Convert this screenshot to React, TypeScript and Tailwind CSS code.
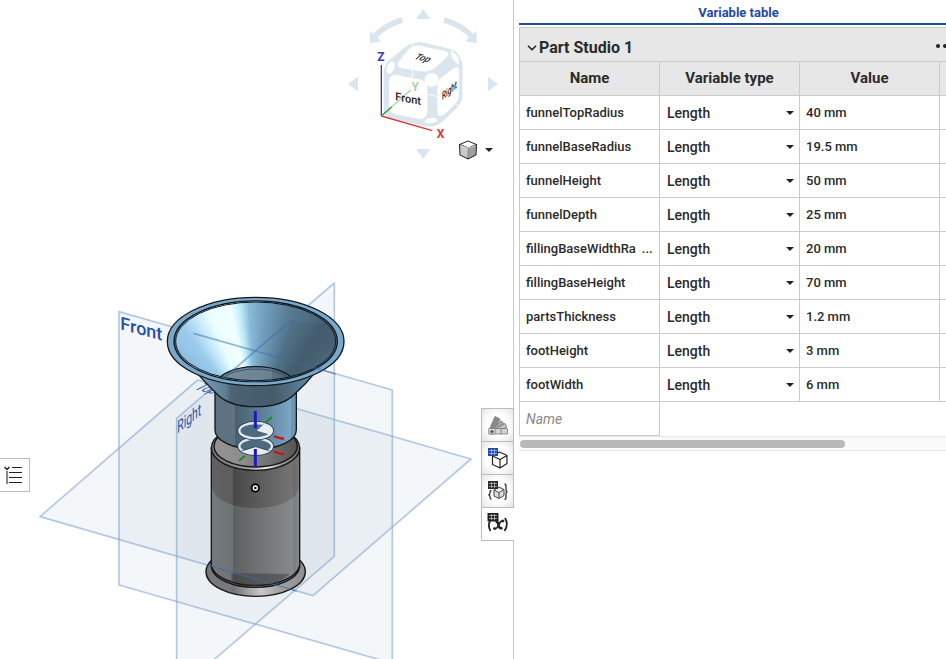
import { ChevronDown } from "lucide-react";

const variables = [
  { name: "funnelTopRadius", value: "40 mm" },
  { name: "funnelBaseRadius", value: "19.5 mm" },
  { name: "funnelHeight", value: "50 mm" },
  { name: "funnelDepth", value: "25 mm" },
  { name: "fillingBaseWidthRa", value: "20 mm", cut: true },
  { name: "fillingBaseHeight", value: "70 mm" },
  { name: "partsThickness", value: "1.2 mm" },
  { name: "footHeight", value: "3 mm" },
  { name: "footWidth", value: "6 mm" },
];

// light on the inside of the funnel: angle in degrees (counter-clockwise from the right), rgb
const coneLight: [number, number[]][] = [
  [-90, [110, 150, 180]],
  [0, [76, 103, 120]],
  [30, [70, 96, 114]],
  [64, [88, 124, 149]],
  [86, [118, 164, 195]],
  [95, [138, 188, 218]],
  [102, [190, 238, 250]],
  [109, [240, 255, 255]],
  [126, [236, 255, 255]],
  [140, [196, 231, 250]],
  [156, [156, 203, 236]],
  [185, [148, 197, 232]],
  [205, [156, 205, 238]],
  [222, [214, 242, 255]],
  [270, [140, 185, 215]],
];

const lightAt = (deg: number) => {
  const i = Math.max(1, coneLight.findIndex(([d]) => d >= deg));
  const [d0, a] = coneLight[i - 1];
  const [d1, b] = coneLight[i];
  const t = (deg - d0) / (d1 - d0);
  return `rgb(${a.map((c, k) => Math.round(c + (b[k] - c) * t)).join(",")})`;
};

const conePoint = (deg: number, cy: number, rx: number, ry: number) => {
  const r = (deg * Math.PI) / 180;
  return `${(677 + rx * Math.cos(r)).toFixed(1)},${(cy - ry * Math.sin(r)).toFixed(1)}`;
};

const coneSlices = Array.from({ length: 180 }, (_, i) => {
  const from = -90 + i * 2;
  const to = Math.min(from + 3, 270);
  return {
    fill: lightAt(from + 1),
    points: [
      conePoint(from, 184, 241, 120),
      conePoint(to, 184, 241, 120),
      conePoint(to, 316, 116, 56),
      conePoint(from, 316, 116, 56),
    ].join(" "),
  };
});

const Model = () => {
  return (
    <svg className="w-full h-full" viewBox="-90 -840 1539 1977" role="img" aria-label="Funnel model">
      <defs>
        <linearGradient id="tube" gradientUnits="userSpaceOnUse" x1="555" x2="800" y1="0" y2="0">
          <stop offset="0" stopColor="#5f7280" />
          <stop offset="0.245" stopColor="#5f7280" />
          <stop offset="0.245" stopColor="#4b5f6e" />
          <stop offset="0.55" stopColor="#5b7c94" />
          <stop offset="0.93" stopColor="#7ba6c5" />
          <stop offset="0.93" stopColor="#6d95b0" />
          <stop offset="1" stopColor="#7196ae" />
        </linearGradient>
        <linearGradient id="skirt" gradientUnits="userSpaceOnUse" x1="500" x2="850" y1="0" y2="0">
          <stop offset="0" stopColor="#7ba5c2" />
          <stop offset="0.25" stopColor="#5f7d92" />
          <stop offset="0.3" stopColor="#4b6373" />
          <stop offset="0.65" stopColor="#445b6a" />
          <stop offset="1" stopColor="#638aa5" />
        </linearGradient>
        <linearGradient id="bodyUpper" gradientUnits="userSpaceOnUse" x1="544" x2="809" y1="0" y2="0">
          <stop offset="0" stopColor="#626262" />
          <stop offset="0.245" stopColor="#5d5d5d" />
          <stop offset="0.245" stopColor="#484848" />
          <stop offset="0.93" stopColor="#757575" />
          <stop offset="0.93" stopColor="#6b6b6b" />
          <stop offset="1" stopColor="#777777" />
        </linearGradient>
        <linearGradient id="bodyLower" gradientUnits="userSpaceOnUse" x1="544" x2="809" y1="0" y2="0">
          <stop offset="0" stopColor="#74797b" />
          <stop offset="0.245" stopColor="#6f7476" />
          <stop offset="0.245" stopColor="#5e5f60" />
          <stop offset="0.93" stopColor="#878a8c" />
          <stop offset="0.93" stopColor="#7b7f82" />
          <stop offset="1" stopColor="#85898c" />
        </linearGradient>
        <linearGradient id="foot" gradientUnits="userSpaceOnUse" x1="528" x2="827" y1="0" y2="0">
          <stop offset="0" stopColor="#757778" />
          <stop offset="0.26" stopColor="#77797a" />
          <stop offset="0.27" stopColor="#707070" />
          <stop offset="0.55" stopColor="#c9c9c9" />
          <stop offset="0.72" stopColor="#a4a4a4" />
          <stop offset="1" stopColor="#8d8d8d" />
        </linearGradient>
        <linearGradient id="inside" gradientUnits="userSpaceOnUse" x1="552" x2="800" y1="0" y2="0">
          <stop offset="0" stopColor="#939393" />
          <stop offset="0.35" stopColor="#8d8d8d" />
          <stop offset="0.65" stopColor="#747474" />
          <stop offset="1" stopColor="#555555" />
        </linearGradient>
        <linearGradient id="rimEdge" gradientUnits="userSpaceOnUse" x1="544" x2="809" y1="0" y2="0">
          <stop offset="0" stopColor="#777777" />
          <stop offset="0.4" stopColor="#9a9a9a" />
          <stop offset="0.62" stopColor="#f2f2f2" />
          <stop offset="0.8" stopColor="#8f8f8f" />
          <stop offset="1" stopColor="#777777" />
        </linearGradient>
        <linearGradient id="throat" gradientUnits="userSpaceOnUse" x1="560" x2="790" y1="0" y2="0">
          <stop offset="0" stopColor="#7890a0" />
          <stop offset="0.72" stopColor="#698293" />
          <stop offset="0.73" stopColor="#58717f" />
          <stop offset="1" stopColor="#4c6473" />
        </linearGradient>
        <clipPath id="mouth">
          <ellipse cx="677" cy="184" rx="241" ry="120" />
        </clipPath>
      </defs>

      {/* reference planes */}
      <g fill="#3f70a0" fillOpacity="0.06" stroke="#7c9fcf" strokeOpacity="0.55" strokeWidth="5" strokeLinejoin="round">
        <path d="M267 95 1087 330V1150L267 915Z" />
        <path d="M440 415 913 9V829L440 1235Z" />
        <path d="M30 710 503 300 1323 537 849 947Z" />
      </g>
      <g fill="#2650a8" fontFamily="Roboto, sans-serif">
        <text fontSize="54" fontWeight="500" transform="translate(271 148) skewY(15)">Front</text>
        <text fontSize="36" transform="translate(490 326) rotate(16) skewX(-48)">Top</text>
        <text fontSize="40" transform="translate(442 461) rotate(-39) skewX(-39)">Right</text>
      </g>

      {/* foot and cylinder */}
      <g stroke="#151515" strokeWidth="4">
        <ellipse cx="677" cy="875" rx="149" ry="74" fill="url(#foot)" />
        <path d="M544 504V862A133 66 0 0 0 809 862V504Z" fill="url(#bodyLower)" />
        <path d="M546 504V625A131 65 0 0 0 807 625V504Z" fill="url(#bodyUpper)" stroke="none" />
        <path d="M544 856A133 66 0 0 0 809 856" fill="none" />
        <ellipse cx="676.5" cy="504" rx="132.5" ry="67" fill="url(#rimEdge)" />
        <ellipse cx="677" cy="499" rx="125" ry="62" fill="url(#inside)" />
      </g>
      <path d="M604 880 780 882Q740 918 677 919Q640 918 604 904Z" fill="#333" fillOpacity="0.45" />

      {/* funnel tube, skirt and rim */}
      <g stroke="#11181d" strokeWidth="4">
        <path d="M555 330V450A122 58 0 0 0 799 450V330Z" fill="url(#tube)" />
        <path d="M495 272Q520 302 563 344Q600 380 677 380Q755 380 792 344Q830 310 858 274Z" fill="url(#skirt)" />
        <ellipse cx="677" cy="184.500" rx="265" ry="132.500" fill="#79a8ca" />
        <ellipse cx="677" cy="184" rx="245" ry="121" fill="#5a7d95" />
      </g>
      <g clipPath="url(#mouth)">
        {coneSlices.map((slice) => (
          <polygon key={slice.points} points={slice.points} fill={slice.fill} />
        ))}
        <path d="M783 121 733 265 830 330 960 300 960 140Z" fill="#21323f" fillOpacity="0.08" />
        <ellipse cx="677" cy="316" rx="118" ry="56" fill="url(#throat)" stroke="#11181d" strokeWidth="4" />
        <ellipse cx="677" cy="318" rx="111" ry="51" fill="none" stroke="#2b3b46" strokeWidth="2" />
      </g>
      <ellipse cx="677" cy="184" rx="240" ry="118" fill="none" stroke="#11181d" strokeWidth="3" />

      {/* plane edges that pass in front of the parts */}
      <g stroke="#3c6da8" strokeOpacity="0.5" strokeWidth="5">
        <path d="M490 160 918 282" />
        <path d="M783 121 575 300" />
        <path d="M532 855 800 933" />
      </g>

      {/* mate connectors */}
      <g fill="none">
        <ellipse cx="677" cy="499" rx="49" ry="23" stroke="#1d3e5c" strokeWidth="12" />
        <ellipse cx="677" cy="499" rx="49" ry="23" fill="#4d6a7f" stroke="#e1e8ee" strokeWidth="7" />
        <path d="M677 500 636 514 655 521H700L718 514Z" fill="#e8edf1" />
        <path d="M636 512 677 500 718 512" stroke="#1d3e5c" strokeWidth="2" />
        <ellipse cx="677" cy="452" rx="49" ry="23" stroke="#1d3e5c" strokeWidth="12" />
        <ellipse cx="677" cy="452" rx="49" ry="23" fill="#4d6a7f" stroke="#e1e8ee" strokeWidth="7" />
        <path d="M678 453 700 431 724 442 726 458 714 464Z" fill="#e8edf1" />
        <path d="M700 433 678 453 713 463" stroke="#1d3e5c" strokeWidth="2" />
        <path d="M676 393V445M676 507V558" stroke="#1d17c4" strokeWidth="9" />
        <path d="M708 427 726 411M627 542 645 527" stroke="#1f8a22" strokeWidth="6" />
        <path d="M731 469 762 477M731 515 762 523" stroke="#c01b1b" strokeWidth="7" />
      </g>
      <circle cx="676" cy="624" r="11" fill="#fff" stroke="#0c0c0c" strokeWidth="6" />
      <circle cx="676" cy="624" r="4" fill="#0c0c0c" />
    </svg>
  );
};

const ViewCube = () => {
  return (
    <svg className="w-full h-full" viewBox="0 0 525 510" role="img" aria-label="View cube">
      <g fill="#dbe5ed">
        <path d="M249 27 271 57H228ZM249 477 228 447H271ZM24 252 54 230V274ZM474 252 444 231V274Z" />
        <path d="M90 92V130L124 124ZM410 92V130L376 124Z" />
        <path d="M187 60Q135 74 101 112M312 60Q365 74 399 112" fill="none" stroke="#dbe5ed" strokeWidth="17" />
        <path d="M240 125 330 147Q352 153 360 170L368 190 367 285Q366 310 350 325L305 367Q285 383 255 379L150 354Q131 348 131 325V220Q131 197 145 182L195 142Q210 129 225 130Z" />
      </g>
      <g fill="#fff">
        <path d="M240 137 315 153Q332 158 320 172L290 200Q272 216 245 214L185 205Q163 198 178 182L203 152Q218 135 240 137Z" />
        <path d="M167 224 243 239Q262 244 262 264V335Q260 358 240 357L165 343Q147 337 147 318V245Q148 223 167 224Z" />
        <path d="M343 203Q357 195 358 215L357 285Q356 303 345 313L314 343Q295 356 292 336V262Q293 241 305 232Z" />
        <circle cx="275" cy="240" r="21" />
        <ellipse cx="152" cy="203" rx="11" ry="20" transform="rotate(22 152 203)" />
        <ellipse cx="345" cy="174" rx="7" ry="21" transform="rotate(-32 345 174)" />
        <ellipse cx="273" cy="362" rx="19" ry="8" transform="rotate(-8 273 362)" />
      </g>
      <path d="M217 204V236M262 282 292 290M210 128 222 141M350 312 358 322M333 151 366 182" stroke="#fff" strokeWidth="3" />
      <g fill="none" strokeWidth="4">
        <path d="M124 195V348" stroke="#3a34cf" />
        <path d="M124 348 277 392" stroke="#d23a3c" />
        <path d="M124 348 212 270" stroke="#a3d8a4" />
        <path d="M124 348 155 321" stroke="#3f9a43" />
      </g>
      <g fontFamily="Roboto, sans-serif" fontWeight="500" fill="#222">
        <text fontSize="33" transform="translate(166 300) skewY(11)">Front</text>
        <text fontSize="27" transform="translate(220 176) rotate(14) skewX(-32)">Top</text>
        <text fontSize="25" transform="translate(306 301) rotate(-40) skewX(-40)">Right</text>
      </g>
      <g fontFamily="Roboto, sans-serif" fontWeight="700" fontSize="36" textAnchor="middle">
        <text x="123" y="184" fill="#3a34cf">Z</text>
        <text x="302" y="414" fill="#d23a3c">X</text>
        <text x="226" y="272" fill="#a3d8a4">Y</text>
      </g>
    </svg>
  );
};

const GridGlyph = ({ color, line }: { color: string; line: string }) => (
  <g>
    <path d="M0 0h10v8H0z" fill={color} />
    <path d="M1 2.500h8M1 5.500h8M3.500 1v6M6.500 1v6" stroke={line} strokeWidth="0.7" />
  </g>
);

const AppearanceIcon = () => (
  <svg width="22" height="22" viewBox="0 0 22 22" stroke="#777" strokeWidth="0.8">
    <path d="M3 14 8 2.500 13 5 7 17Z" fill="#8a8a8a" />
    <path d="M6 15 14 6.500 17.500 10 9 18Z" fill="#a5a5a5" />
    <path d="M9 14.500 18 9.500 20 13 10 18Z" fill="#c2c2c2" />
    <path d="M2 14.500H20.500V20H2Z" fill="#d2d2d2" />
    <path d="M2 14.500H8V20H2Z" fill="#fff" />
    <path d="M14 14.500V20" />
    <circle cx="5" cy="17.500" r="1.600" fill="#555" />
  </svg>
);

const ConfigurationIcon = () => (
  <svg width="22" height="22" viewBox="0 0 22 22">
    <path d="M12.500 5 20 8.500V16.500L13 21 5.500 17.500V9ZM5.500 9 13 12.500 20 8.500M13 12.500V21" fill="#fff" stroke="#222" strokeWidth="1.200" strokeLinejoin="round" />
    <g transform="translate(1 1)">
      <GridGlyph color="#1f4aa5" line="#a9c6f2" />
    </g>
  </svg>
);

const CustomTableIcon = () => (
  <svg width="22" height="22" viewBox="0 0 22 22">
    <path d="M12 7 17 9.500V15.500L12 18.500 7 16V10ZM7 10 12 12.500 17 9.500M12 12.500V18.500" fill="#ddd" stroke="#444" strokeLinejoin="round" />
    <path d="M4.500 10.500Q3 10.500 3 12.500T1.500 15Q3 15 3 17T4.500 19.500M17.500 4Q19 4 19 6.500V9.500Q19 11.500 20.500 11.500Q19 11.500 19 13.500V17Q19 19.500 17.500 19.500" fill="none" stroke="#333" strokeWidth="1.300" />
    <g transform="translate(1 1)">
      <GridGlyph color="#2b2b2b" line="#bbb" />
    </g>
  </svg>
);

const VariableIcon = () => (
  <svg width="22" height="22" viewBox="0 0 22 22" fill="none" stroke="#222">
    <path d="M3 8Q0.500 13 3.500 18M18 5Q22 11.500 17.500 18" strokeWidth="1.800" />
    <path d="M8.500 9Q11 8 11.500 12T15.500 15" strokeWidth="2.600" />
    <path d="M16.500 8Q14 7 12 11.500T7 16" strokeWidth="1.600" />
    <circle cx="16" cy="8" r="1" fill="#222" />
    <circle cx="7.500" cy="15.500" r="1" fill="#222" />
    <g transform="translate(1 0)">
      <GridGlyph color="#222" line="#ccc" />
    </g>
  </svg>
);

const panelTabs = [
  { label: "Appearance panel", icon: <AppearanceIcon /> },
  { label: "Configuration panel", icon: <ConfigurationIcon /> },
  { label: "Custom tables", icon: <CustomTableIcon /> },
];

const Caret = ({ className = "" }: { className?: string }) => (
  <svg className={className} width="8" height="4" viewBox="0 0 8 4">
    <path d="M0 0h8L4 4z" fill="#222" />
  </svg>
);

const Viewport = () => {
  return (
    <main className="relative z-10 flex-1 min-w-0">
      <Model />

      <div className="absolute top-0 right-0 w-[173px] h-[170px]">
        <div className="w-[175px] h-[170px]">
          <ViewCube />
        </div>
        <button className="absolute right-5 bottom-[10px] flex items-center gap-2" aria-label="View options">
          <svg width="18" height="20" viewBox="0 0 18 20" stroke="#222" strokeLinejoin="round">
            <path d="M9 1 17.500 4.500 9.500 8 0.500 4.500Z" fill="#fff" />
            <path d="M0.500 4.500 9.500 8 9 19 1 15Z" fill="#c9c9c9" />
            <path d="M17.500 4.500 9.500 8 9 19 17 15Z" fill="#9f9f9f" />
            <path d="M9 8.500V18M1.500 5.500 9.500 8 16.500 5.500" stroke="#ddd" fill="none" />
          </svg>
          <Caret />
        </button>
      </div>

      <button
        className="absolute -left-px top-[458px] flex h-[34px] w-[31px] items-center border border-[#bdbdbd] bg-white pl-1"
        aria-label="Show feature list"
      >
        <svg width="18" height="18" viewBox="0 0 18 18" fill="none">
          <path d="M0.500 1 3 3.500 5.500 1" stroke="#222" strokeWidth="1.500" />
          <path d="M3 5V18" stroke="#888" strokeWidth="2" />
          <path d="M8 1.500h10M5 6.500h13M5 11.500h13M5 16.500h13" stroke="#222" />
        </svg>
      </button>

      <nav className="absolute -right-px top-[408px] w-[33px] border-t border-[#bdbdbd]">
        {panelTabs.map((tab) => (
          <button
            key={tab.label}
            aria-label={tab.label}
            className="flex h-[33px] w-full items-center justify-center border-x border-b border-[#bdbdbd] bg-radial from-white from-50% to-[#e4e4e4]"
          >
            {tab.icon}
          </button>
        ))}
        <button
          aria-label="Variable table"
          className="flex h-[33px] w-full items-center justify-center border-b border-l border-[#bdbdbd] bg-white pr-px"
        >
          <VariableIcon />
        </button>
      </nav>
    </main>
  );
};

const VariableTable = () => {
  return (
    <aside className="w-[433px] shrink-0 overflow-hidden border-l border-[#c8c8c8] pl-[5px]">
      <h1 className="h-[25px] border-b-2 border-[#1f4aa5] pl-3 text-center text-[13px] leading-[25px] font-bold text-[#1f4aa5]">
        Variable table
      </h1>

      <div className="mt-[2px] flex h-[34px] items-center border-t border-l border-[#cbcbcb] bg-[#e7e7e7] pt-[6px] pl-[5px]">
        <button className="flex items-center text-base font-bold">
          <ChevronDown size={14} strokeWidth={3} />
          Part Studio 1
        </button>
        <button className="-mr-[10px] mb-1 ml-auto" aria-label="More">
          <svg width="20" height="6" viewBox="0 0 20 6" fill="#222">
            <circle cx="2" cy="3" r="2" />
            <circle cx="9" cy="3" r="2" />
            <circle cx="16" cy="3" r="2" />
          </svg>
        </button>
      </div>

      <table className="w-[561px] table-fixed border-collapse text-[13px] font-medium">
        <thead>
          <tr className="h-[34px] bg-[#e7e7e7] text-[15px]">
            <th className="border border-[#cbcbcb] p-0">Name</th>
            <th className="border border-[#cbcbcb] p-0">Variable type</th>
            <th className="border border-[#cbcbcb] p-0">Value</th>
            <th className="border border-[#cbcbcb] p-0" aria-label="Description" />
          </tr>
        </thead>
        <tbody>
          {variables.map((variable) => (
            <tr key={variable.name} className="h-[34px]">
              <td className="border border-[#cbcbcb] py-0 pl-[6px] pr-1 whitespace-nowrap">
                {variable.name}
                {variable.cut && <span className="pl-[6px]">...</span>}
              </td>
              <td className="border border-[#cbcbcb] p-0">
                <div className="relative flex items-center">
                  <select
                    aria-label={`Type of ${variable.name}`}
                    className="h-8 w-full appearance-none bg-transparent pl-[7px] text-sm"
                  >
                    <option>Length</option>
                  </select>
                  <Caret className="pointer-events-none absolute right-[5px]" />
                </div>
              </td>
              <td className="border border-[#cbcbcb] py-0 pl-[6px]">{variable.value}</td>
              <td className="border border-[#cbcbcb] p-0" />
            </tr>
          ))}
          <tr className="h-[34px]">
            <td className="border border-[#cbcbcb] p-0">
              <input
                aria-label="New variable name"
                placeholder="Name"
                className="h-8 w-full px-[6px] text-sm font-normal italic placeholder:text-[#8a8a8a]"
              />
            </td>
          </tr>
        </tbody>
      </table>

      <div className="flex h-[15px] items-center border-y border-[#e8e8e8] bg-[#fafafa]">
        <div className="ml-px h-2 w-[76%] rounded-full bg-[#b9b9b9]" />
      </div>
    </aside>
  );
};

export default function App() {
  return (
    <div className="flex h-screen overflow-hidden bg-white font-[Roboto,sans-serif] text-[#2b2b2b]">
      <Viewport />
      <VariableTable />
    </div>
  );
}
